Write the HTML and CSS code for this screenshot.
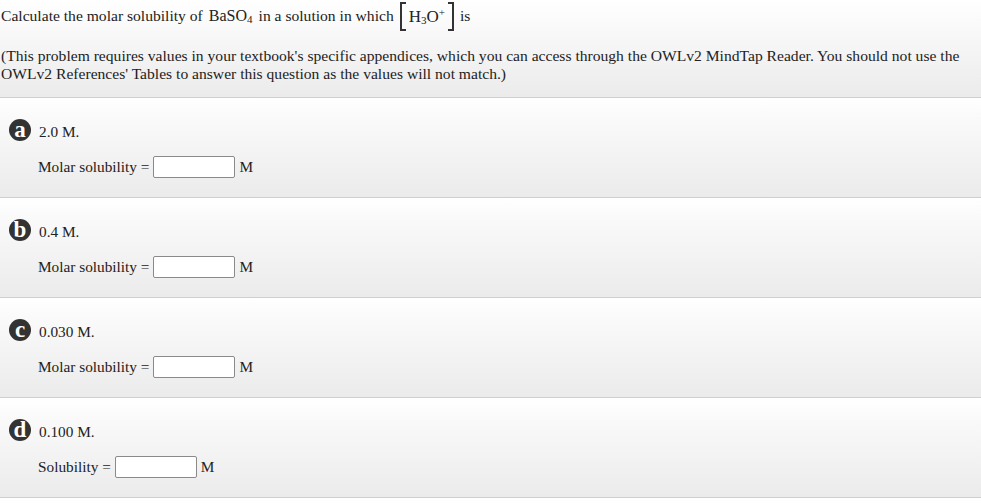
FILE: index.html
```html
<!DOCTYPE html>
<html>
<head>
<meta charset="utf-8">
<link rel="stylesheet" href="styles.css">
</head>
<body>
<div class="header">
  <div class="q-line">
    <span>Calculate the molar solubility of</span>
    <span class="math">BaSO<sub>4</sub></span>
    <span>in a solution in which</span>
    <span class="math bracket"><span class="lb"></span><span class="inner">H<sub>3</sub>O<sup>+</sup></span><span class="rb"></span></span>
    <span>is</span>
  </div>
  <p class="note">(This problem requires values in your textbook's specific appendices, which you can access through the OWLv2 MindTap Reader. You should not use the OWLv2 References' Tables to answer this question as the values will not match.)</p>
</div>

<div class="part">
  <div class="part-head"><span class="badge">a</span><span class="given">2.0 M.</span></div>
  <div class="answer"><span>Molar solubility =</span><span class="box"></span><span class="unit">M</span></div>
</div>
<div class="part">
  <div class="part-head"><span class="badge">b</span><span class="given">0.4 M.</span></div>
  <div class="answer"><span>Molar solubility =</span><span class="box"></span><span class="unit">M</span></div>
</div>
<div class="part">
  <div class="part-head"><span class="badge">c</span><span class="given">0.030 M.</span></div>
  <div class="answer"><span>Molar solubility =</span><span class="box"></span><span class="unit">M</span></div>
</div>
<div class="part">
  <div class="part-head"><span class="badge">d</span><span class="given">0.100 M.</span></div>
  <div class="answer"><span>Solubility =</span><span class="box"></span><span class="unit">M</span></div>
</div>
</body>
</html>
```
FILE: styles.css
```css
html, body {
  margin: 0;
  padding: 0;
  background: #fff;
}
body {
  font-family: "Liberation Serif", "Times New Roman", serif;
  font-size: 15.3px;
  color: #222;
}
.header {
  height: 98px;
  box-sizing: border-box;
  border-bottom: 1px solid #cfcfcf;
  background: linear-gradient(#ffffff, #ebebeb);
  padding: 1px 0 0 1px;
  font-size: 15.6px;
}
.q-line {
  display: flex;
  align-items: center;
  gap: 4px;
  height: 30px;
  white-space: nowrap;
}
.math {
  font-family: "Liberation Serif", serif;
  font-size: 16px;
  padding: 0 2px;
}
.math sub, .math sup {
  font-size: 11px;
  line-height: 0;
}
.math sub { vertical-align: -2px; }
.math sup { vertical-align: 6px; }
.bracket {
  display: inline-flex;
  align-items: stretch;
  height: 29px;
  padding: 0 2px;
}
.bracket .inner {
  align-self: center;
  padding: 0 3px;
  line-height: 1;
  font-size: 17px;
}
.bracket .lb, .bracket .rb {
  width: 4px;
  border: 2px solid #333;
}
.bracket .lb { border-right: none; }
.bracket .rb { border-left: none; }
.note {
  margin: 16px 0 0 0;
  line-height: 18px;
  padding-right: 8px;
}
.part {
  height: 100px;
  box-sizing: border-box;
  border-bottom: 1px solid #cfcfcf;
  background: linear-gradient(#ffffff, #fafafa 20%, #ebebeb);
  padding: 21px 0 0 9px;
}
.part-head {
  display: flex;
  align-items: center;
  gap: 7px;
  height: 22px;
}
.given {
  padding-top: 3px;
  margin-left: 1px;
}
.badge {
  width: 22px;
  height: 22px;
  border-radius: 50%;
  background: #333;
  color: #fff;
  font-weight: bold;
  font-size: 23px;
  display: flex;
  align-items: center;
  justify-content: center;
  line-height: 1;
  padding-bottom: 2px;
  box-sizing: border-box;
}
.answer {
  display: flex;
  align-items: center;
  margin: 15px 0 0 29px;
  height: 22px;
}
.box {
  display: inline-block;
  width: 80px;
  height: 20px;
  border: 1px solid #8a8a8a;
  border-radius: 2px;
  background: #fff;
  margin-left: 4px;
}
.unit {
  margin-left: 4px;
}
```
